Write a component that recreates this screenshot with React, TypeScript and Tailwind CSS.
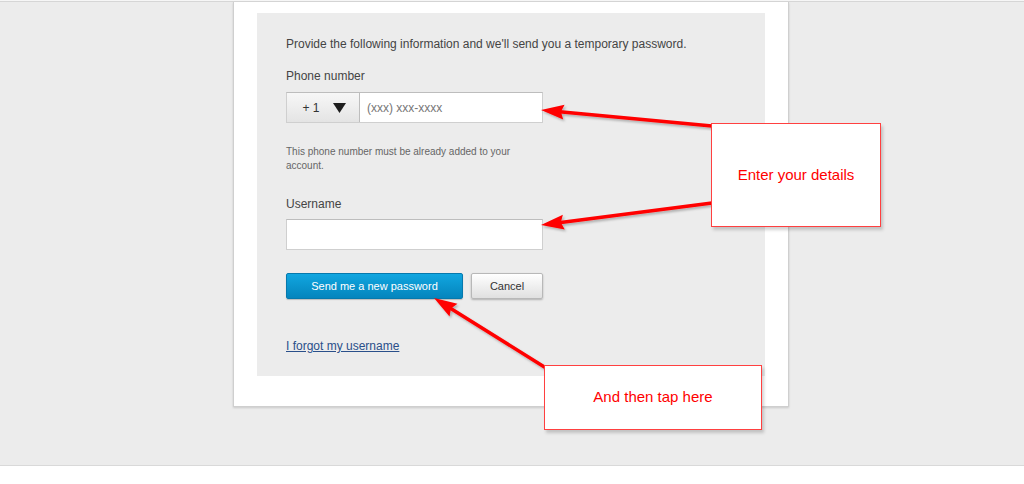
import React from 'react'

type Arrow = { tail: [number, number]; tip: [number, number] }

// Annotation arrows drawn over the screenshot
const ARROWS: Arrow[] = [
  { tail: [712, 126], tip: [541, 110] },
  { tail: [712, 203], tip: [541, 225] },
  { tail: [546, 368], tip: [434, 298] },
]

function arrowHead({ tail, tip }: Arrow, len = 23, half = 7.5): string {
  const dx = tip[0] - tail[0]
  const dy = tip[1] - tail[1]
  const d = Math.hypot(dx, dy)
  const ux = dx / d
  const uy = dy / d
  const bx = tip[0] - ux * len
  const by = tip[1] - uy * len
  const px = -uy * half
  const py = ux * half
  return `${tip[0]},${tip[1]} ${bx + px},${by + py} ${bx + ux * 3},${by + uy * 3} ${bx - px},${by - py}`
}

function Annotations(): React.ReactElement {
  return (
    <svg className="pointer-events-none absolute inset-0" width={1024} height={484} viewBox="0 0 1024 484">
      <defs>
        <filter id="sh" x="-20%" y="-20%" width="140%" height="140%">
          <feDropShadow dx="1.5" dy="2" stdDeviation="1" floodColor="#000" floodOpacity="0.25" />
        </filter>
      </defs>
      {ARROWS.map((a, i) => {
        const dx = a.tip[0] - a.tail[0]
        const dy = a.tip[1] - a.tail[1]
        const d = Math.hypot(dx, dy)
        const ex = a.tip[0] - (dx / d) * 16
        const ey = a.tip[1] - (dy / d) * 16
        return (
          <g key={i} filter="url(#sh)">
            <line x1={a.tail[0]} y1={a.tail[1]} x2={ex} y2={ey} stroke="#ff0000" strokeWidth={3.5} strokeLinecap="round" />
            <polygon points={arrowHead(a)} fill="#ff0000" />
          </g>
        )
      })}
    </svg>
  )
}

function Callout({ className, children }: { className: string; children: React.ReactNode }): React.ReactElement {
  return (
    <div
      className={`absolute flex items-center justify-center border border-[#ff4040] bg-white text-[15px] text-[#ff0000] shadow-[2px_3px_3px_rgba(0,0,0,0.18)] ${className}`}
    >
      {children}
    </div>
  )
}

export default function App(): React.ReactElement {
  return (
    <div className="relative flex h-[484px] w-[1024px] flex-col overflow-hidden bg-[#ececec] font-['Liberation_Sans',Arial,sans-serif]">
      <div className="h-px bg-[#f6f6f6]" />
      <div className="h-px bg-[#d6d6d6]" />

      <main className="h-[463px]">
        <div className="ml-[233px] h-[405px] w-[556px] border-x border-b border-[#cfcfcf] bg-white pt-[11px] shadow-[0_1px_2px_rgba(0,0,0,0.15)]">
          <section
            aria-label="Reset password"
            className="ml-[23px] flex h-[363px] w-[508px] flex-col bg-[#ececec] pl-[29px] pt-[23px]"
          >
            <p className="text-[12px] leading-4 text-[#444]">
              Provide the following information and we'll send you a temporary password.
            </p>

            <label className="mt-4 text-[12px] leading-4 text-[#444]">Phone number</label>
            <div className="mt-2 flex h-[31px] w-[257px] border border-[#cfcfcf] border-t-[#bdbdbd] bg-white">
              <div className="flex w-[73px] items-center justify-center gap-[13px] border-r border-[#bdbdbd] bg-gradient-to-b from-[#f7f7f7] to-[#e4e4e4] pl-[2px] text-[12px] text-[#333]">
                <span>+ 1</span>
                <svg width="13" height="10" viewBox="0 0 13 10">
                  <polygon points="0,0 13,0 6.5,10" fill="#1e1e1e" />
                </svg>
              </div>
              <span className="flex items-center pl-[7px] text-[12px] text-[#777]">(xxx) xxx-xxxx</span>
            </div>

            <p className="mt-[22px] w-[250px] text-[10px] leading-[14px] text-[#666]">
              This phone number must be already added to your account.
            </p>

            <label className="mt-[23px] text-[12px] leading-4 text-[#444]">Username</label>
            <div className="mt-[7px] h-[31px] w-[257px] border border-[#cfcfcf] border-t-[#bdbdbd] bg-white" />

            <div className="mt-[23px] flex gap-2">
              <button
                type="button"
                className="h-[26px] w-[177px] rounded-[2px] border border-[#0679ad] bg-gradient-to-b from-[#11a6e0] to-[#0585bd] text-[11px] text-white shadow-[0_1px_1px_rgba(0,0,0,0.2)]"
              >
                Send me a new password
              </button>
              <button
                type="button"
                className="h-[26px] w-[72px] rounded-[2px] border border-[#b8b8b8] bg-gradient-to-b from-[#ffffff] to-[#e0e0e0] text-[11px] text-[#333] shadow-[0_1px_2px_rgba(0,0,0,0.25)]"
              >
                Cancel
              </button>
            </div>

            <a href="#" className="mt-[39px] self-start text-[12px] leading-4 text-[#2a4f8a] underline">
              I forgot my username
            </a>
          </section>
        </div>
      </main>

      <footer className="flex-1 border-t border-[#d9d9d9] bg-white" />

      <Annotations />
      <Callout className="left-[711px] top-[123px] h-[104px] w-[170px]">Enter your details</Callout>
      <Callout className="left-[544px] top-[365px] h-[65px] w-[218px]">And then tap here</Callout>
    </div>
  )
}
